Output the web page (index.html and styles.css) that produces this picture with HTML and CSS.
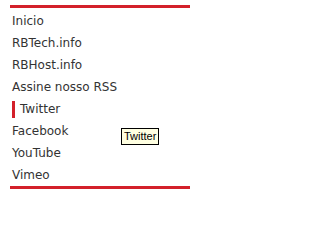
FILE: index.html
```html
<!DOCTYPE html>
<html>
<head>
<meta charset="utf-8">
<link rel="stylesheet" href="styles.css">
</head>
<body>
<div class="page">
  <ul class="menu">
    <li><a href="#">Inicio</a></li>
    <li><a href="#">RBTech.info</a></li>
    <li><a href="#">RBHost.info</a></li>
    <li><a href="#">Assine nosso RSS</a></li>
    <li class="hover"><a href="#">Twitter</a></li>
    <li><a href="#">Facebook</a></li>
    <li><a href="#">YouTube</a></li>
    <li><a href="#">Vimeo</a></li>
  </ul>
  <div class="tooltip">Twitter</div>
</div>
</body>
</html>
```
FILE: styles.css
```css
html, body {
  margin: 0;
  padding: 0;
  background: #ffffff;
}
.page {
  position: relative;
  width: 202px;
  height: 201px;
  padding: 5px 12px 0 10px;
  box-sizing: border-box;
}
.menu {
  list-style: none;
  margin: 0;
  padding: 2px 0 0 0;
  border-top: 3px solid #d3202a;
  border-bottom: 3px solid #d3202a;
  font-family: "DejaVu Sans", Verdana, sans-serif;
  font-size: 12px;
}
.menu li {
  padding: 3px 0 2px 2px;
}
.menu a {
  display: block;
  line-height: 17px;
  color: #333333;
  text-decoration: none;
}
.menu li.hover a {
  border-left: 3px solid #d3202a;
  padding-left: 5px;
}
.tooltip {
  position: absolute;
  left: 121px;
  top: 128px;
  background: #ffffe1;
  border: 1px solid #000000;
  padding: 0 2px;
  font-family: "Liberation Sans", Arial, sans-serif;
  font-size: 11px;
  line-height: 15px;
  color: #000000;
}
```
